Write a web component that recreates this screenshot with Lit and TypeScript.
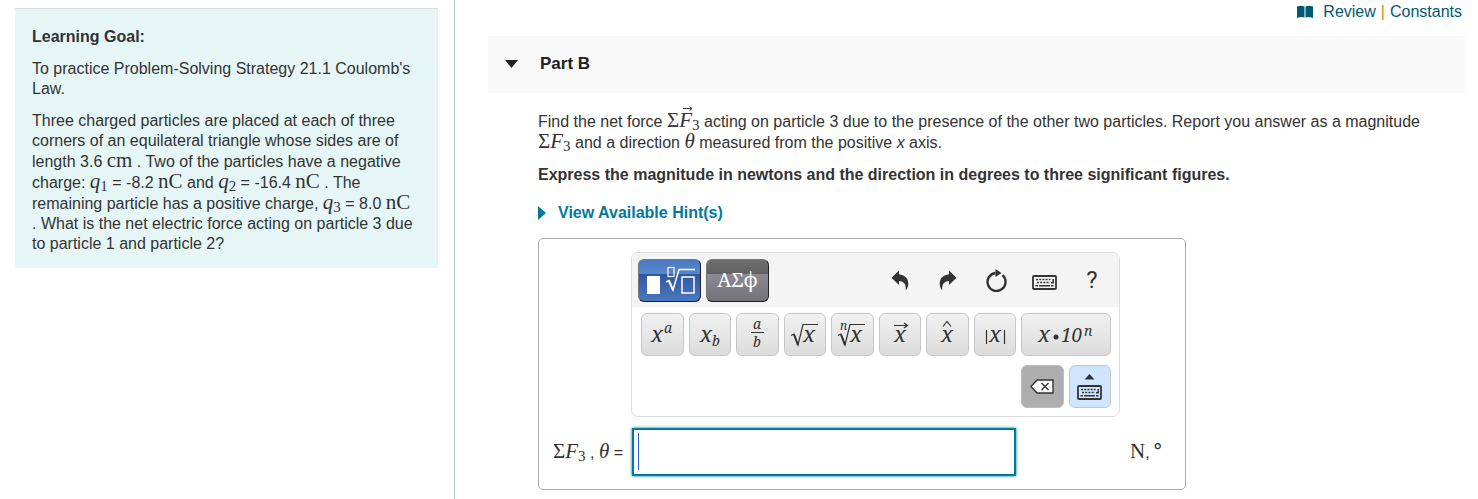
import { LitElement, html, css, svg } from "lit";
import { customElement, state } from "lit/decorators.js";

const keyboardShape = svg`
  <rect x="1" y="1" width="23" height="13" rx="1" fill="none" stroke="currentColor" stroke-width="1.8"/>
  <path d="M4 4.5H18.5M5 7.5H18" stroke="currentColor" stroke-width="1.6" stroke-dasharray="2 1.2"/>
  <path d="M19 7.8H21.2V4" fill="none" stroke="currentColor" stroke-width="1.5"/>
  <path d="M3.5 10.8H6M7 10.8H18M19 10.8H21.5" stroke="currentColor" stroke-width="1.6"/>`;

const keys = [
  { label: "Superscript", art: svg`<text x="9" y="28" class="big">x</text><text x="22" y="19" class="mid">a</text>` },
  { label: "Subscript", art: svg`<text x="10" y="28" class="big">x</text><text x="22" y="32" class="mid">b</text>` },
  {
    label: "Fraction",
    art: svg`<text x="20" y="15" class="mid" text-anchor="middle">a</text>
      <path d="M14 18.5H27" class="line"/><text x="20" y="33" class="mid" text-anchor="middle">b</text>`,
  },
  {
    label: "Square root",
    art: svg`<path d="M6 21.500L9 20L13 31L18 10.500H33" class="line"/><path d="M9 20.500L13 31" class="thick"/>
      <text x="18" y="28" class="big">x</text>`,
  },
  {
    label: "Nth root",
    art: svg`<text x="8" y="16" class="small">n</text><path d="M6 21.500L9 20L13 31L18 10.500H33" class="line"/>
      <path d="M9 20.500L13 31" class="thick"/><text x="18" y="28" class="big">x</text>`,
  },
  {
    label: "Vector",
    art: svg`<path d="M14 11.500H27M24 9L27.500 11.500L24 14" class="line"/>
      <text x="20" y="28" class="big" text-anchor="middle">x</text>`,
  },
  {
    label: "Unit vector",
    art: svg`<path d="M16 12.500L20 7.500L24 12.500" class="line"/>
      <text x="20" y="28" class="big" text-anchor="middle">x</text>`,
  },
  {
    label: "Absolute value",
    art: svg`<path d="M11.500 16V30M29.500 16V30" class="line"/>
      <text x="20" y="28" class="big" text-anchor="middle">x</text>`,
  },
];

@customElement("app-root")
export class AppRoot extends LitElement {
  @state() private answer = "";

  static styles = css`
    :host {
      display: grid;
      grid-template-columns: 454px minmax(0, 1fr);
      min-height: 100vh;
      box-sizing: border-box;
      background: #fff;
      color: #333;
      font: 16px/20px "Liberation Sans", Arial, sans-serif;
    }
    * { box-sizing: border-box; }
    p, h2, h3 { margin: 0; font-size: 16px; }
    button { font: inherit; color: inherit; padding: 0; border: 0; background: none; cursor: pointer; }
    a { color: #005a70; text-decoration: none; }
    svg { display: block; }
    .left { padding: 8px 16px 8px 15px; }
    .goal {
      display: grid;
      gap: 12px;
      padding: 18px 21px 14px 17px;
      border-top: 1px solid #d9dfdf;
      background: #e6f6f7;
    }
    .math { font: 21px/18px "Liberation Serif", "Times New Roman", serif; white-space: nowrap; }
    .math i { font-style: italic; }
    .math sub { font-size: 15px; line-height: 0; vertical-align: -3px; }
    .vec { position: relative; }
    .vec svg { position: absolute; left: 4px; top: -2px; }
    .right { border-left: 1px solid #b5c7d6; padding: 2px 13px 9px 33px; }
    .links { display: flex; justify-content: flex-end; align-items: center; gap: 5px; padding-right: 3px; }
    .links svg { margin-right: 5px; }
    .pipe { color: #d68a1e; }
    .part {
      display: flex;
      align-items: center;
      gap: 22px;
      width: 100%;
      height: 57px;
      margin-top: 14px;
      padding: 0 17px 2px;
      background: #f9f9f9;
      color: #222;
      font-size: 17px;
      font-weight: bold;
    }
    .body { display: grid; gap: 12px; padding: 18px 0 0 50px; }
    .prompt { padding-right: 24px; }
    .hint {
      display: flex;
      align-items: center;
      gap: 12px;
      justify-self: start;
      margin: 6px 0 3px;
      color: #007a9c;
      font-weight: bold;
    }
    .answer {
      max-width: 648px;
      border: 1px solid #aaa;
      border-radius: 5px;
      padding: 13px 14px;
      display: grid;
      grid-template-columns: 78px 385px 1fr;
      align-items: center;
      row-gap: 11px;
    }
    .palette {
      grid-column: 2 / 4;
      width: 489px;
      border: 1px solid #dcdcdc;
      border-radius: 7px;
      overflow: hidden;
    }
    .head { display: flex; align-items: center; gap: 5px; height: 54px; padding: 0 3px 0 6px; background: #f4f4f4; }
    .tab {
      width: 63px;
      height: 43px;
      border: 1px solid #222;
      border-top-color: #777;
      border-left-color: #777;
      border-radius: 6px;
      color: #fff;
      background: linear-gradient(#6e6e6e, #616161 34%, #8b8a94 35%, #747379);
      font: 20px/38px "Noto Serif", "DejaVu Serif", serif;
    }
    .tab.on { background: linear-gradient(#4a78be, #5a86cc 34%, #2f58a2 35%, #4a78bf); }
    .tools { display: flex; margin-left: auto; }
    .tool { display: grid; place-items: center; width: 48px; height: 48px; }
    .help { font: 24px/24px Roboto, "Noto Sans", sans-serif; }
    .keys {
      display: grid;
      grid-template-columns: repeat(10, minmax(0, 1fr));
      gap: 9px 5px;
      padding: 6px 8px 8px 9px;
    }
    .key {
      height: 43px;
      display: grid;
      place-items: center;
      border: 1px solid #c6c6c6;
      border-radius: 6px;
      background: linear-gradient(#f1f1f1, #dcdcdc);
    }
    .wide { grid-column: span 2; }
    .del { grid-column: 9; background: #aeaeae; border-color: #bdbdbd; }
    .toggle { background: #cfe5ff; }
    .big, .mid, .small, .digits { font-family: "Noto Serif", "DejaVu Serif", serif; font-style: italic; fill: #333; }
    .big { font-size: 22px; }
    .digits { font-size: 19px; }
    .mid { font-size: 14px; }
    .small { font-size: 12px; }
    .line { fill: none; stroke: #333; stroke-width: 1.2; }
    .thick { fill: none; stroke: #333; stroke-width: 2; }
    .field { position: relative; padding-left: 1px; }
    .field input {
      display: block;
      width: 100%;
      height: 48px;
      padding: 0 8px;
      border: 2px solid #007a9c;
      box-shadow: 0 0 3px #007a9c;
      outline: none;
      background: #fff;
      font: 20px "Liberation Serif", serif;
    }
    .caret { position: absolute; left: 7px; top: 5px; width: 1px; height: 37px; background: #2a62e8; }
    .units { display: flex; align-items: baseline; gap: 3px; padding-left: 114px; }
    .degree { font: 20px/18px "DejaVu Serif", serif; }
  `;

  private onInput(e: Event) {
    this.answer = (e.target as HTMLInputElement).value;
  }

  private sym(letter: string, n: string) {
    return html`<span class="math"><i>${letter}</i><sub>${n}</sub></span>`;
  }

  render() {
    return html`
      <aside class="left">
        <section class="goal">
          <h2>Learning Goal:</h2>
          <p>To practice Problem-Solving Strategy 21.1 Coulomb's Law.</p>
          <p>
            Three charged particles are placed at each of three corners of an equilateral triangle whose sides
            are of length 3.6 <span class="math">cm</span> . Two of the particles have a negative charge:
            ${this.sym("q", "1")} = -8.2 <span class="math">nC</span> and ${this.sym("q", "2")} = -16.4
            <span class="math">nC</span> . The remaining particle has a positive charge,
            ${this.sym("q", "3")} = 8.0 <span class="math">nC</span> . What is the net electric force acting on
            particle 3 due to particle 1 and particle 2?
          </p>
        </section>
      </aside>
      <main class="right">
        <nav class="links">
          <svg width="16" height="14" viewBox="0 0 16 14" fill="#005a70" aria-hidden="true">
            <path d="M0 1.500Q4 0 7.500 1.500V12.500Q4 11.500 0 13ZM8.500 1.500Q12 0 16 1.500V13Q12 11.500 8.500 12.500Z"/>
          </svg>
          <a href="#review">Review</a><span class="pipe">|</span><a href="#constants">Constants</a>
        </nav>
        <button class="part" aria-expanded="true">
          <svg width="13" height="8" viewBox="0 0 13 8" aria-hidden="true"><path d="M0 0H13L6.500 8Z" fill="#222"/></svg>
          <span>Part B</span>
        </button>
        <div class="body">
          <p class="prompt">
            Find the net force <span class="math">Σ<span class="vec"><i>F</i><svg width="10" height="5" viewBox="0 0 10 5" aria-hidden="true"><path d="M0 2.500H9M6.500 0.500L9 2.500L6.500 4.500" fill="none" stroke="#333"/></svg></span><sub>3</sub></span>
            acting on particle 3 due to the presence of the other two particles. Report you answer as a magnitude
            <span class="math">Σ<i>F</i><sub>3</sub></span> and a direction
            <span class="math"><i>θ</i></span> measured from the positive <i>x</i> axis.
          </p>
          <h3>Express the magnitude in newtons and the direction in degrees to three significant figures.</h3>
          <button class="hint" aria-expanded="false">
            <svg width="8" height="14" viewBox="0 0 8 14" aria-hidden="true"><path d="M0 0L8 7L0 14Z" fill="#007a9c"/></svg>
            <span>View Available Hint(s)</span>
          </button>
          <form class="answer" @submit=${(e: Event) => e.preventDefault()}>
            <div class="palette">
              <div class="head">
                <button type="button" class="tab on" aria-label="Templates">
                  <svg width="61" height="41" viewBox="0 0 61 41" fill="none" stroke="#fff" stroke-width="1.500">
                    <rect x="8" y="16" width="13" height="18" fill="#fff" stroke="none"/>
                    <rect x="29" y="7.500" width="6" height="9" stroke-width="1.200"/>
                    <path d="M27 22L30 20.500L34 30L40 9.500H56"/><path d="M30 21L34 30" stroke-width="2"/>
                    <rect x="43" y="17" width="12" height="16"/>
                  </svg>
                </button>
                <button type="button" class="tab">ΑΣϕ</button>
                <div class="tools">
                  <button type="button" class="tool" aria-label="Undo">
                    <svg width="24" height="24" viewBox="0 0 24 24" fill="#333"><path d="M3.500 9.800L11 2.500V6.500C17.500 7 20.500 11 20.300 16C20.200 19 19 21 17.700 22.300C18.200 17 16.500 13.200 11 13V17Z"/></svg>
                  </button>
                  <button type="button" class="tool" aria-label="Redo">
                    <svg width="24" height="24" viewBox="0 0 24 24" fill="#333"><path d="M20.500 9.800L13 2.500V6.500C6.500 7 3.500 11 3.700 16C3.800 19 5 21 6.300 22.300C5.800 17 7.500 13.200 13 13V17Z"/></svg>
                  </button>
                  <button type="button" class="tool" aria-label="Reset">
                    <svg width="24" height="24" viewBox="0 0 24 24"><path d="M18.500 7.200A9 9 0 1 1 11.500 5" fill="none" stroke="#333" stroke-width="2.400"/><path d="M11.500 1L17.500 5L11.500 9Z" fill="#333"/></svg>
                  </button>
                  <button type="button" class="tool" aria-label="Keyboard shortcuts">
                    <svg width="25" height="19" viewBox="0 -4 25 19">${keyboardShape}</svg>
                  </button>
                  <button type="button" class="tool help">?</button>
                </div>
              </div>
              <div class="keys">
                ${keys.map(
                  (k) => html`<button type="button" class="key" aria-label=${k.label}>
                    <svg width="40" height="41" viewBox="0 0 40 41">${k.art}</svg>
                  </button>`
                )}
                <button type="button" class="key wide" aria-label="Scientific notation">
                  <svg width="88" height="41" viewBox="0 0 88 41">
                    <text x="16" y="28" class="big">x</text><circle cx="34" cy="23" r="2.500" fill="#333"/>
                    <text x="39" y="28" class="digits">10</text><text x="62" y="22" class="mid">n</text>
                  </svg>
                </button>
                <button type="button" class="key del" aria-label="Delete">
                  <svg width="24" height="16" viewBox="0 0 24 16"><path d="M1 7.500L7 1H23V14H7Z" fill="#fff" stroke="#333" stroke-width="1.400"/><path d="M11.500 4L18.500 11M18.500 4L11.500 11" stroke="#333" stroke-width="1.400"/></svg>
                </button>
                <button type="button" class="key toggle" aria-label="Hide palette">
                  <svg width="25" height="26" viewBox="0 -11 25 26"><path d="M7.500 -5.500L12.500 -11L17.500 -5.500Z" fill="#333"/>${keyboardShape}</svg>
                </button>
              </div>
            </div>
            <label for="answer"><span class="math">Σ<i>F</i><sub>3</sub></span> , <span class="math"><i>θ</i></span> =</label>
            <div class="field">
              <input id="answer" type="text" autocomplete="off" .value=${this.answer} @input=${this.onInput} />
              ${this.answer ? "" : html`<span class="caret"></span>`}
            </div>
            <div class="units"><span><span class="math">N</span>,</span><span class="degree">°</span></div>
          </form>
        </div>
      </main>
    `;
  }
}
